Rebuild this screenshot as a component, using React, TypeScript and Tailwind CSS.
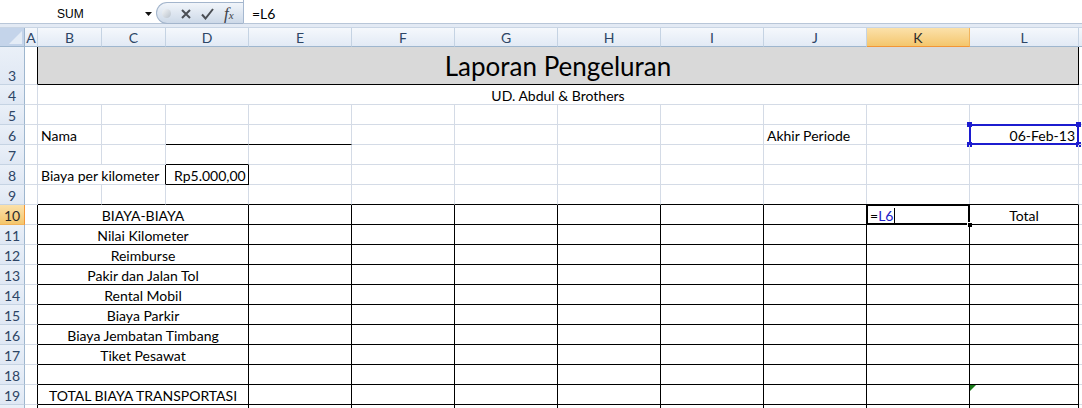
import React from 'react';

type Edge = 'g' | 'k';

const rightCls: Record<Edge, string> = { g: 'border-r-[#d4dbe6]', k: 'border-r-black' };
const bottomCls: Record<Edge, string> = { g: 'border-b-[#d4dbe6]', k: 'border-b-black' };
const spanCls: Record<number, string> = { 1: '', 2: 'col-span-2', 3: 'col-span-3', 11: 'col-span-11' };

const letters = ['A', 'B', 'C', 'D', 'E', 'F', 'G', 'H', 'I', 'J', 'K', 'L', 'M'];

const biaya = [
    'BIAYA-BIAYA',
    'Nilai Kilometer',
    'Reimburse',
    'Pakir dan Jalan Tol',
    'Rental Mobil',
    'Biaya Parkir',
    'Biaya Jembatan Timbang',
    'Tiket Pesawat',
    '',
    'TOTAL BIAYA TRANSPORTASI',
    '',
];

type CellProps = { span?: number; r?: Edge; b?: Edge; className?: string; children?: React.ReactNode };

function Cell({ span = 1, r = 'g', b = 'g', className = '', children }: CellProps) {
    return (
        <div
            className={`relative flex items-end whitespace-nowrap border-r border-b px-[3px] text-[14px] leading-[16px] text-black ${rightCls[r]} ${bottomCls[b]} ${spanCls[span]} ${className}`}
        >
            {children}
        </div>
    );
}

function RowHead({ n, active = false }: { n: number; active?: boolean }) {
    return (
        <div
            className={`flex items-end justify-center border-r border-b text-[14px] leading-[16px] ${
                active
                    ? 'border-r-[#f29536] border-b-[#f2b45c] bg-gradient-to-b from-[#fbe1aa] to-[#f4c66c] text-[#2c2c2c]'
                    : 'border-r-[#9eb6ce] border-b-[#c5d3e3] bg-gradient-to-b from-[#eaf0f8] to-[#e0e8f4] text-[#2d4565]'
            }`}
        >
            {n}
        </div>
    );
}

function ColHead({ l }: { l: string }) {
    const active = l === 'K';
    return (
        <div
            className={`flex items-center justify-center border-r border-b text-[14px] leading-[17px] ${
                active
                    ? 'border-r-[#f2b45c] border-b-[#f29536] bg-gradient-to-b from-[#fbe1aa] to-[#f4c66c] text-[#2c2c2c]'
                    : 'border-r-[#c5d3e3] border-b-[#9eb6ce] bg-gradient-to-b from-[#f5f8fc] to-[#e2eaf5] text-[#2d4565]'
            }`}
        >
            {l === 'M' ? '' : l}
        </div>
    );
}

function Handle({ className }: { className: string }) {
    return <div className={`absolute h-[5px] w-[5px] bg-[#1c1ccf] ${className}`} />;
}

export default function App() {
    return (
        <div className="h-[408px] w-[1082px] overflow-hidden bg-white font-['Lato','Liberation_Sans',sans-serif]">
            {/* Formula bar */}
            <div className="flex h-[24px] border-b border-[#b8c6d8] bg-white">
                <div className="relative flex w-[156px] items-center pt-[4px]">
                    <span className="ml-[57px] font-['Liberation_Sans',sans-serif] text-[12px] text-black">SUM</span>
                    <svg className="absolute left-[145px] top-[12px]" width="7" height="4" viewBox="0 0 7 4">
                        <path d="M0 0h7L3.5 4z" fill="#111" />
                    </svg>
                </div>
                <div className="mt-[2px] flex h-[22px] w-[87px] items-center gap-[10px] rounded-l-full border border-r-0 border-[#a3b5cc] bg-gradient-to-b from-[#f1f5fa] to-[#cdd9e8] pt-[1px] pl-[5px]">
                    <div className="h-[9px] w-[9px] rounded-full bg-gradient-to-br from-[#f4f6f8] to-[#b9c2cc]" />
                    <svg width="10" height="10" viewBox="0 0 10 10">
                        <path d="M1 1l8 8M9 1l-8 8" stroke="#4a4e54" strokeWidth="2" />
                    </svg>
                    <svg width="13" height="12" viewBox="0 0 13 12">
                        <path d="M1 6.5l3.5 4L12 1" fill="none" stroke="#4a4e54" strokeWidth="2" />
                    </svg>
                    <span className="font-['Liberation_Serif',serif] text-[17px] italic leading-none text-[#3e4248]">
                        f<span className="text-[11px]">x</span>
                    </span>
                </div>
                <div className="flex flex-1 items-center border-l border-[#a5b8d0] pt-[4px] pl-[8px] text-[14px] text-black">=L6</div>
            </div>
            <div className="h-[4px] border-b border-[#c9d5e4] bg-[#e3eaf4]" />

            {/* Sheet */}
            <div className="grid grid-cols-[25px_13px_64px_64px_83px_103px_103px_103px_103px_103px_103px_103px_109px_40px] grid-rows-[19px_38px_repeat(17,20px)]">
                {/* header */}
                <div className="relative border-r border-b border-r-[#9eb6ce] border-b-[#9eb6ce] bg-[#c4d4ea]">
                    <svg className="absolute right-[2px] bottom-[2px]" width="13" height="13" viewBox="0 0 13 13">
                        <path d="M13 0V13H0z" fill="#e4ecf6" />
                    </svg>
                </div>
                {letters.map((l) => (
                    <ColHead key={l} l={l} />
                ))}

                {/* row 3 */}
                <RowHead n={3} />
                <Cell r="k" />
                <Cell span={11} r="k" b="k" className="justify-center bg-[#d9d9d9] pb-[3px]">
                    <span className="text-[26px] leading-[30px]">Laporan Pengeluran</span>
                </Cell>
                <Cell />

                {/* row 4 */}
                <RowHead n={4} />
                <Cell />
                <Cell span={11} className="justify-center">
                    UD. Abdul &amp; Brothers
                </Cell>
                <Cell />

                {/* row 5 */}
                <RowHead n={5} />
                {letters.map((l) => (
                    <Cell key={l} />
                ))}

                {/* row 6 */}
                <RowHead n={6} />
                <Cell />
                <Cell>Nama</Cell>
                <Cell />
                <Cell b="k" />
                <Cell b="k" />
                <Cell />
                <Cell />
                <Cell />
                <Cell />
                <Cell>Akhir Periode</Cell>
                <Cell />
                <Cell className="justify-end">
                    06-Feb-13
                    <div className="absolute -top-[1px] -left-[1px] h-[21px] w-[110px] border-2 border-[#1c1ccf]" />
                    <Handle className="-top-[3px] -left-[3px]" />
                    <Handle className="-top-[3px] -right-[3px]" />
                    <Handle className="-bottom-[3px] -left-[3px]" />
                    <Handle className="-bottom-[3px] -right-[3px]" />
                </Cell>
                <Cell />

                {/* row 7 */}
                <RowHead n={7} />
                <Cell />
                <Cell />
                <Cell />
                <Cell b="k" />
                {letters.slice(4).map((l) => (
                    <Cell key={l} />
                ))}

                {/* row 8 */}
                <RowHead n={8} />
                <Cell />
                <Cell span={2} r="k">
                    Biaya per kilometer
                </Cell>
                <Cell r="k" b="k" className="justify-between pr-[7px] pl-[8px] text-[13.5px]">
                    <span>Rp</span>
                    <span>5.000,00</span>
                </Cell>
                {letters.slice(4).map((l) => (
                    <Cell key={l} />
                ))}

                {/* row 9 */}
                <RowHead n={9} />
                <Cell />
                {letters.slice(1, 12).map((l) => (
                    <Cell key={l} b="k" />
                ))}
                <Cell />

                {/* table rows 10 - 20 */}
                {biaya.map((label, i) => {
                    const n = 10 + i;
                    return (
                        <React.Fragment key={n}>
                            <RowHead n={n} active={n === 10} />
                            <Cell r="k" />
                            <Cell span={3} r="k" b="k" className="justify-center">
                                {label}
                            </Cell>
                            {letters.slice(4, 12).map((l) => (
                                <Cell key={l} r="k" b="k" className={l === 'L' ? 'justify-center' : ''}>
                                    {n === 10 && l === 'K' && (
                                        <>
                                            <span>
                                                =<span className="text-[#2020c8]">L6</span>
                                            </span>
                                            <span className="mb-[1px] ml-[1px] h-[15px] w-[1px] bg-black" />
                                            <div className="absolute -top-[1px] -left-[1px] h-[21px] w-[104px] border-2 border-black" />
                                            <div className="absolute -right-[4px] -bottom-[4px] h-[6px] w-[6px] border border-white bg-black" />
                                        </>
                                    )}
                                    {n === 10 && l === 'L' && 'Total'}
                                    {n === 19 && l === 'L' && (
                                        <svg className="absolute top-0 left-0" width="6" height="6" viewBox="0 0 6 6">
                                            <path d="M0 0h6L0 6z" fill="#1a7a1a" />
                                        </svg>
                                    )}
                                </Cell>
                            ))}
                            <Cell />
                        </React.Fragment>
                    );
                })}
            </div>
        </div>
    );
}
